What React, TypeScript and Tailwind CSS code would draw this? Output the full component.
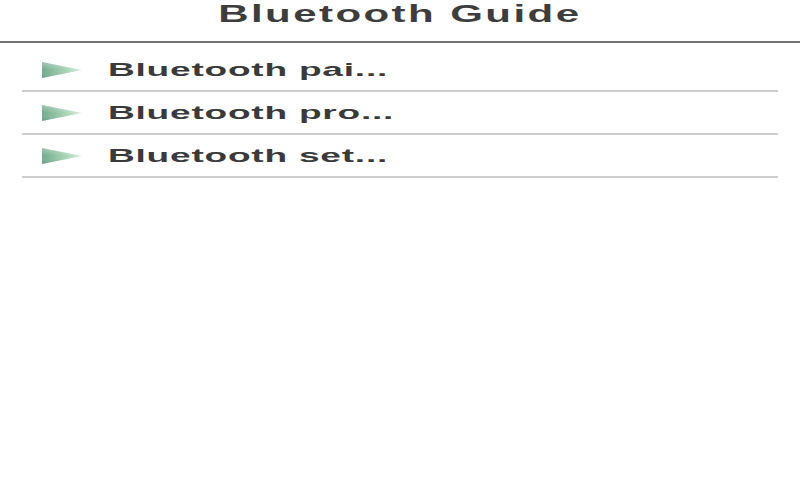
import { useId } from "react";

const topics = ["Bluetooth pai...", "Bluetooth pro...", "Bluetooth set..."];

function Arrow() {
  const id = useId();
  return (
    <svg width="40" height="16" viewBox="0 0 40 16" className="shrink-0">
      <defs>
        <linearGradient id={`${id}-h`} x1="0" y1="0" x2="1" y2="0">
          <stop offset="0" stopColor="#6fa98d" />
          <stop offset="0.6" stopColor="#a9d4b4" />
          <stop offset="1" stopColor="#d9efdd" />
        </linearGradient>
        <linearGradient id={`${id}-v`} x1="0" y1="0" x2="0" y2="1">
          <stop offset="0" stopColor="#ffffff" stopOpacity="0.35" />
          <stop offset="0.5" stopColor="#ffffff" stopOpacity="0" />
          <stop offset="1" stopColor="#3d7a5e" stopOpacity="0.25" />
        </linearGradient>
      </defs>
      <polygon points="0,0 40,8 0,16" fill={`url(#${id}-h)`} />
      <polygon points="0,0 40,8 0,16" fill={`url(#${id}-v)`} />
    </svg>
  );
}

export default function App() {
  return (
    <div
      className="w-[800px] h-[480px] bg-white overflow-hidden"
      style={{ fontFamily: '"Liberation Sans", Arial, sans-serif' }}
    >
      <header className="h-[41px] flex justify-center items-start">
        <h1 className="inline-block text-[24px] leading-[27px] font-bold text-[#3d3d3d] tracking-[1.4px] scale-x-[1.75] origin-center">
          Bluetooth Guide
        </h1>
      </header>
      <div className="h-[2px] bg-[#727272]" />

      <ul className="mx-[22px] mt-[6px]">
        {topics.map((t) => (
          <li
            key={t}
            className="h-[43px] flex items-center border-b-[2px] border-[#cdcdcd]"
          >
            <div className="ml-[20px] w-[66px] flex">
              <Arrow />
            </div>
            <span className="inline-block text-[19px] leading-none font-bold text-[#3a3a3a] tracking-[0.4px] scale-x-[1.95] origin-left whitespace-nowrap">
              {t}
            </span>
          </li>
        ))}
      </ul>
    </div>
  );
}
